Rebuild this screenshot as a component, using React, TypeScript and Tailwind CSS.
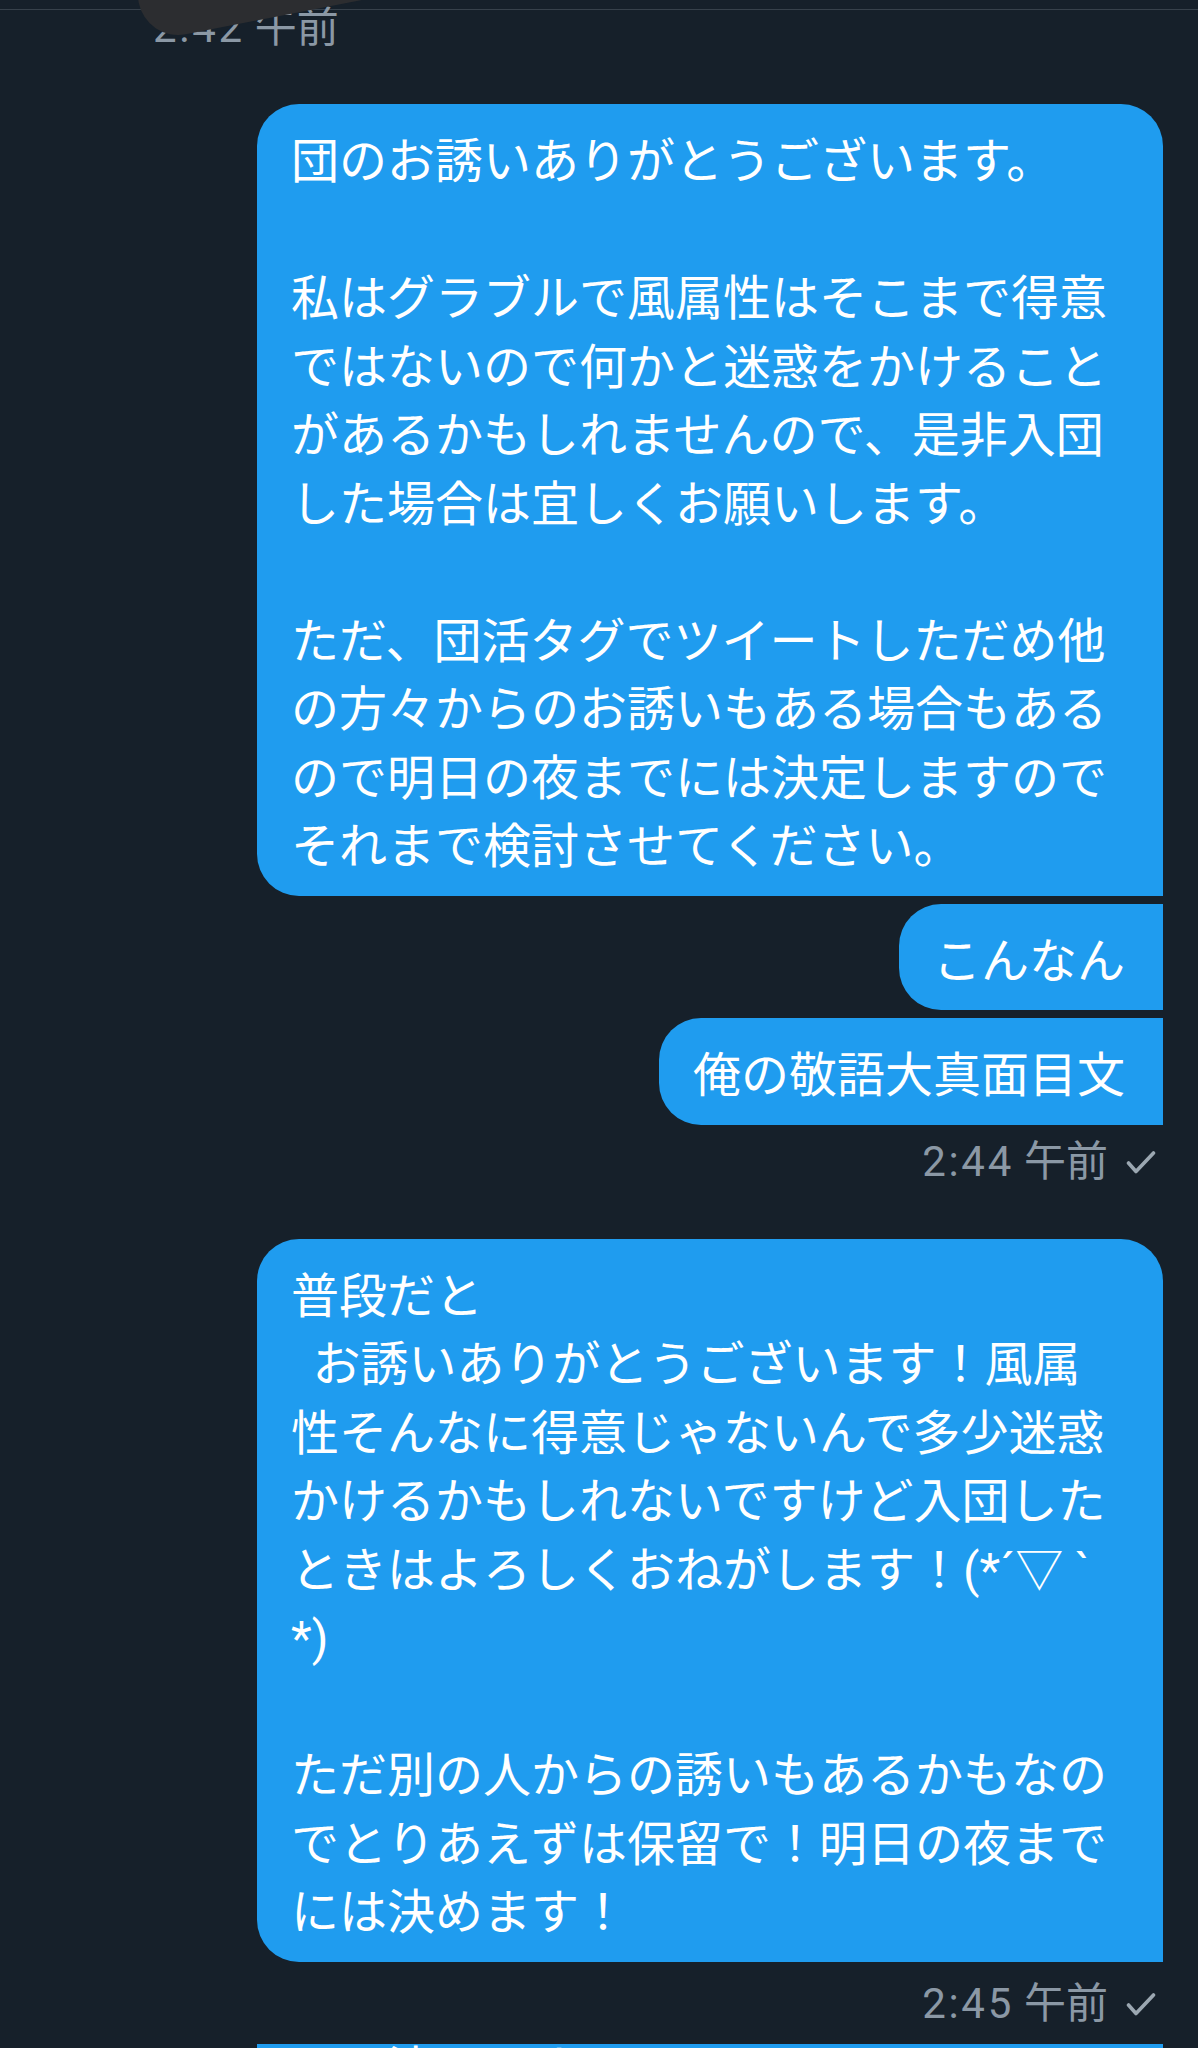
import React from "react";

type Corner = "first" | "middle" | "last" | "single";

const cornerClass: Record<Corner, string> = {
  first: "rounded-[42px] rounded-br-none",
  single: "rounded-[42px] rounded-br-none",
  middle: "rounded-l-[42px]",
  last: "rounded-l-[42px]",
};

function MessageBubble({ corner, children }: { corner: Corner; children: React.ReactNode }) {
  return (
    <div
      className={`max-w-[906px] bg-[#1f9cef] pl-[34px] pr-[38px] py-[19px] text-[48px] leading-[68.5px] text-white whitespace-pre-wrap ${cornerClass[corner]}`}
    >
      {children}
    </div>
  );
}

function Check() {
  return (
    <svg width="30" height="24" viewBox="0 0 30 24" fill="none" className="ml-[18px]">
      <path d="M2.5 13 L10 21.5 L27.5 3" stroke="#9ba7b1" strokeWidth="3.6" strokeLinecap="round" strokeLinejoin="round" />
    </svg>
  );
}

function Time({ hm, className = "", right }: { hm: string; className?: string; right?: boolean }) {
  return (
    <div
      className={`flex items-center text-[42px] leading-[48px] text-[#8b98a5] font-['Roboto','Noto_Sans_CJK_JP',sans-serif] ${className}`}
    >
      <span className="tracking-[2.7px]">{hm}</span>
      <span className="ml-[10px]">午前</span>
      {right && <Check />}
    </div>
  );
}

export default function App() {
  return (
    <main className="relative h-[2048px] overflow-hidden bg-[#16202a] font-['Noto_Sans_CJK_JP','Noto_Sans',sans-serif]">
      {/* header edge */}
      <div className="h-[10px] border-b border-[#37414b]" />

      <Time hm="2:42" className="-mt-[6px] pl-[153px]" />

      <section className="mt-[52px] flex flex-col items-end gap-[8px] pr-[35px]">
        <MessageBubble corner="first">
          {"団のお誘いありがとうございます。\n\n私はグラブルで風属性はそこまで得意ではないので何かと迷惑をかけることがあるかもしれませんので、是非入団した場合は宜しくお願いします。\n\nただ、団活タグでツイートしただめ他の方々からのお誘いもある場合もあるので明日の夜までには決定しますのでそれまで検討させてください。"}
        </MessageBubble>
        <MessageBubble corner="middle">こんなん</MessageBubble>
        <MessageBubble corner="last">俺の敬語大真面目文</MessageBubble>
        <Time hm="2:44" right className="mt-[5px] pr-[7px]" />

        <div className="mt-[37px]" />
        <MessageBubble corner="single">
          {"普段だと\n  お誘いありがとうございます！風属性そんなに得意じゃないんで多少迷惑かけるかもしれないですけど入団したときはよろしくおねがします！"}
          <span className="leading-none font-['Roboto','Noto_Sans_CJK_JP',sans-serif]">{"(*´▽ `\n*)"}</span>
          {"\n\nただ別の人からの誘いもあるかもなのでとりあえずは保留で！明日の夜までには決めます！"}
        </MessageBubble>
        <Time hm="2:45" right className="mt-[10px] pr-[7px]" />

        {/* next screenshot starts with the same bubble, cut at the top */}
        <div className="mt-[8px] h-[10px] w-[906px] overflow-hidden bg-[#1f9cef] pl-[34px] text-[48px] leading-[68.5px] text-white">
          <div className="-mt-[13px]">には決めます！</div>
        </div>
      </section>

      {/* blurred finger overlay at the top */}
      <div className="absolute left-[138px] top-[-45px] h-[80px] w-[420px] origin-[40px_40px] rotate-[-11deg] rounded-full bg-[#2c2d30]" />
    </main>
  );
}
